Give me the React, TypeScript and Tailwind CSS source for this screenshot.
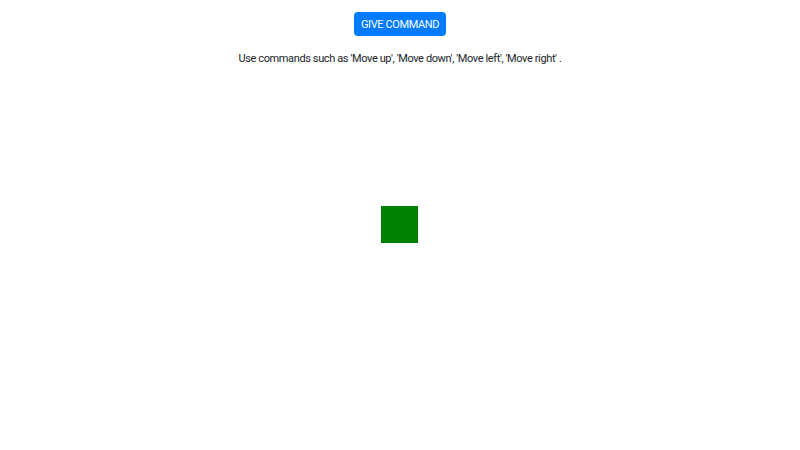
import { useState } from 'react';

const STEP = 20;

export default function App() {
  const [pos, setPos] = useState({ x: 0, y: 0 });
  const [listening, setListening] = useState(false);

  const runCommand = (cmd: string) => {
    const c = cmd.toLowerCase();
    if (c.includes('up')) setPos(p => ({ ...p, y: p.y - STEP }));
    else if (c.includes('down')) setPos(p => ({ ...p, y: p.y + STEP }));
    else if (c.includes('left')) setPos(p => ({ ...p, x: p.x - STEP }));
    else if (c.includes('right')) setPos(p => ({ ...p, x: p.x + STEP }));
  };

  const handleClick = () => {
    setListening(true);
    const cmd = window.prompt('Command') || '';
    runCommand(cmd);
    setListening(false);
  };

  return (
    <div className="relative w-full h-screen bg-white font-['Roboto',sans-serif] text-[#212529]">
      <div className="flex flex-col items-center pt-3">
        <button
          type="button"
          onClick={handleClick}
          className="h-6 w-[92px] whitespace-nowrap rounded bg-[#007bff] text-white text-[11px] leading-none tracking-[-0.035em]"
        >
          {listening ? 'LISTENING...' : 'GIVE COMMAND'}
        </button>
        <p className="mt-[15px] text-[11px] leading-4 tracking-[-0.035em]">
          Use commands such as 'Move up', 'Move down', 'Move left', 'Move right' .
        </p>
      </div>

      {/* moving square on the canvas */}
      <div
        className="absolute w-[37px] h-[37px] bg-[#008000]"
        style={{ left: `calc(50% - 19px + ${pos.x}px)`, top: `calc(50% - 19px + ${pos.y}px)` }}
      />
    </div>
  );
}
